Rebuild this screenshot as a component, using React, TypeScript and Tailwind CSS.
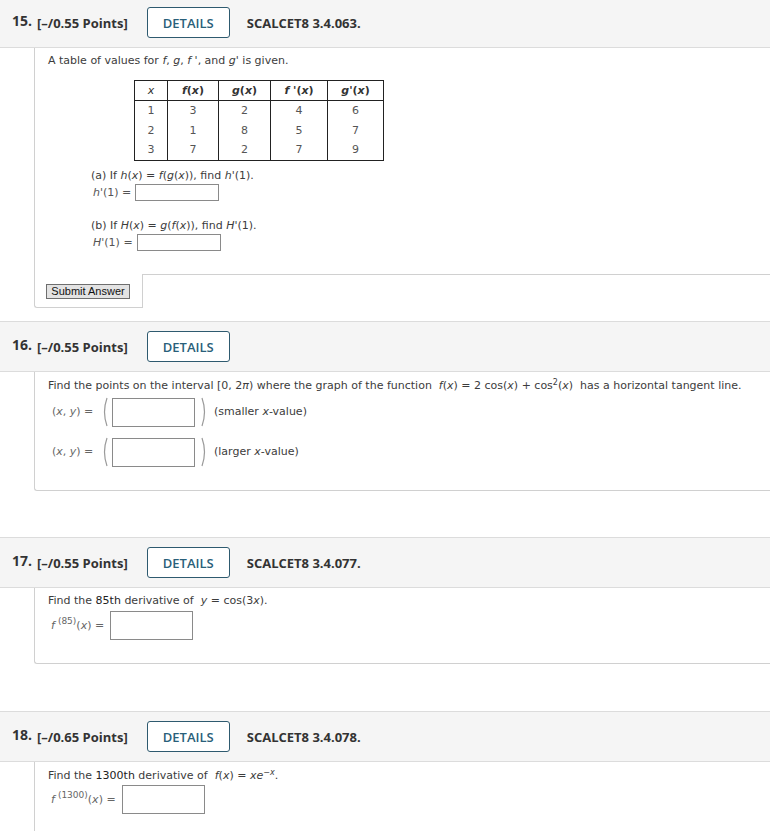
import React from "react"

const line = "border-[#d0d0d0]"

function Header({ num, points, code }: { num: string; points: string; code?: string }) {
  return (
    <div className="flex h-[51px] items-center border-y border-[#dcdcdc] bg-[#f5f5f5] font-['Open_Sans',sans-serif] text-[#333]">
      <span className="ml-[12px] w-[25px] -mt-[3px] text-[14px] font-bold">{num}</span>
      <span className="text-[13px] font-bold">[–/{points} Points]</span>
      <button className="ml-[19px] h-[31px] w-[83px] rounded-[3px] border border-[#2e5a6f] bg-white text-[13px] font-semibold text-[#2a5f7a]">
        DETAILS
      </button>
      {code && <span className="ml-[17px] text-[13px] font-bold">{code}</span>}
    </div>
  )
}

function I({ children }: { children: React.ReactNode }) {
  return <span className="italic">{children}</span>
}

function Box({ small }: { small?: boolean }) {
  return small ? (
    <span className="inline-block h-[17px] w-[84px] border border-[#8a8a8a] bg-white align-middle" />
  ) : (
    <span className="inline-block h-[29px] w-[83px] border border-[#8a8a8a] bg-white align-middle" />
  )
}

function Paren({ right }: { right?: boolean }) {
  return (
    <svg width="7" height="30" viewBox="0 0 7 30" className="shrink-0">
      <path
        d={right ? "M1 1 Q6 15 1 29" : "M6 1 Q1 15 6 29"}
        fill="none"
        stroke="#9a9a9a"
        strokeWidth="1.2"
      />
    </svg>
  )
}

function Point({ label }: { label: string }) {
  return (
    <div className="flex items-center">
      <span className="ml-[4px] w-[49px] text-[#666]">
        (<I>x</I>, <I>y</I>) =
      </span>
      <Paren />
      <span className="ml-[4px]">
        <Box />
      </span>
      <span className="ml-[6px]">
        <Paren right />
      </span>
      <span className="ml-[6px]">
        ({label} <I>x</I>-value)
      </span>
    </div>
  )
}

export default function App() {
  const cell = "border-r border-[#222] text-center"
  const rows = [
    ["1", "3", "2", "4", "6"],
    ["2", "1", "8", "5", "7"],
    ["3", "7", "2", "7", "9"],
  ]

  return (
    <div className="min-h-screen bg-white font-['DejaVu_Sans',Verdana,sans-serif] text-[11px] leading-[16px] text-[#3c3c3c] overflow-hidden">
      <div className="-mt-[3px]">
        {/* 15 */}
        <Header num="15." points="0.55" code="SCALCET8 3.4.063." />
        <div className="ml-[34px]">
          <div className={`border-l ${line} pl-[13px] pt-[5px] pb-[23px]`}>
            <p>
              A table of values for <I>f</I>, <I>g</I>, <I>f</I> ', and <I>g</I>' is given.
            </p>
            <table className="ml-[86px] mt-[11px] border border-[#222] border-collapse text-[#555]">
              <thead>
                <tr className="h-[20px] border-b border-[#222] text-[#333]">
                  <th className={`${cell} w-[33px] font-normal`}><I>x</I></th>
                  <th className={`${cell} w-[51px] font-semibold`}><I>f</I>(<I>x</I>)</th>
                  <th className={`${cell} w-[52px] font-semibold`}><I>g</I>(<I>x</I>)</th>
                  <th className={`${cell} w-[57px] font-semibold`}><I>f</I> '(<I>x</I>)</th>
                  <th className={`${cell} w-[56px] font-semibold`}><I>g</I>'(<I>x</I>)</th>
                </tr>
              </thead>
              <tbody>
                {rows.map((r) => (
                  <tr key={r[0]} className="h-[20px]">
                    {r.map((v, i) => (
                      <td key={i} className={cell}>{v}</td>
                    ))}
                  </tr>
                ))}
              </tbody>
            </table>
            <div className="ml-[43px] mt-[7px]">
              <p>
                (a) If <I>h</I>(<I>x</I>) = <I>f</I>(<I>g</I>(<I>x</I>)), find <I>h</I>'(1).
              </p>
              <div className="ml-[2px] flex items-center gap-[4px]">
                <span className="text-[#555]"><I>h</I>'(1) =</span>
                <Box small />
              </div>
              <p className="mt-[17px]">
                (b) If <I>H</I>(<I>x</I>) = <I>g</I>(<I>f</I>(<I>x</I>)), find <I>H</I>'(1).
              </p>
              <div className="ml-[2px] flex items-center gap-[4px]">
                <span className="text-[#555]"><I>H</I>'(1) =</span>
                <Box small />
              </div>
            </div>
          </div>
          <div className="flex h-[34px]">
            <div className={`flex w-[108px] items-center border-l border-b ${line} rounded-bl-[3px] pl-[11px]`}>
              <button className="mt-[1px] h-[15px] w-[84px] border border-[#6e6e6e] bg-[#e3e3e3] font-['Liberation_Sans',Arial,sans-serif] text-[11px] leading-[13px] text-[#111]">
                Submit Answer
              </button>
            </div>
            <div className={`flex-1 border-l border-t ${line}`} />
          </div>
        </div>

        {/* 16 */}
        <div className="mt-[13px]">
          <Header num="16." points="0.55" />
        </div>
        <div className={`ml-[34px] border-l border-b ${line} rounded-bl-[3px] pl-[13px] pt-[6px] pb-[23px]`}>
          <p>
            Find the points on the interval [0, 2<I>π</I>) where the graph of the function&nbsp; <I>f</I>(<I>x</I>) = 2 cos(<I>x</I>) + cos<sup className="text-[8px]">2</sup>(<I>x</I>)&nbsp; has a horizontal tangent line.
          </p>
          <div className="mt-[3px]">
            <Point label="smaller" />
          </div>
          <div className="mt-[10px]">
            <Point label="larger" />
          </div>
        </div>

        {/* 17 */}
        <div className="mt-[46px]">
          <Header num="17." points="0.55" code="SCALCET8 3.4.077." />
        </div>
        <div className={`ml-[34px] border-l border-b ${line} rounded-bl-[3px] pl-[13px] pt-[5px] pb-[23px]`}>
          <p>
            Find the <span className="text-[#222]">85th</span> derivative of&nbsp; <I>y</I> = cos(3<I>x</I>).
          </p>
          <div className="mt-[2px] flex items-center gap-[6px]">
            <span className="ml-[3px] text-[#666]">
              <I>f</I>
              <sup className="ml-[3px] text-[9px]">(85)</sup>(<I>x</I>) =
            </span>
            <Box />
          </div>
        </div>

        {/* 18 */}
        <div className="mt-[47px]">
          <Header num="18." points="0.65" code="SCALCET8 3.4.078." />
        </div>
        <div className={`ml-[34px] border-l ${line} pl-[13px] pt-[6px] pb-[23px]`}>
          <p>
            Find the <span className="text-[#222]">1300th</span> derivative of&nbsp; <I>f</I>(<I>x</I>) = <I>xe</I>
            <sup className="text-[8px] italic">−x</sup>.
          </p>
          <div className="mt-[1px] flex items-center gap-[6px]">
            <span className="ml-[3px] text-[#666]">
              <I>f</I>
              <sup className="ml-[3px] text-[9px]">(1300)</sup>(<I>x</I>) =
            </span>
            <Box />
          </div>
        </div>
      </div>
    </div>
  )
}
